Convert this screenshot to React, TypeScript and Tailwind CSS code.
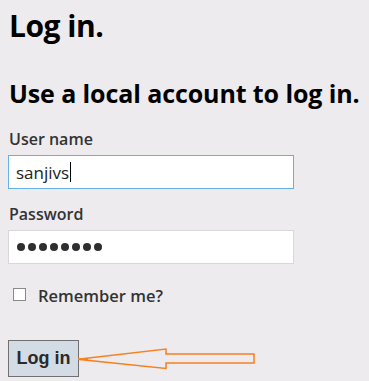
export default function App() {
  const dots = [0, 1, 2, 3, 4, 5, 6, 7];

  return (
    <div className="w-[369px] h-[381px] overflow-hidden bg-[#edebee] text-[#333] font-['Open_Sans',sans-serif]">
      <div className="pl-[8px] pt-[6px]">
        {/* Headings */}
        <h1 className="pl-[1px] text-[30px] leading-[40px] font-bold text-black tracking-[-0.5px]">Log in.</h1>
        <h2 className="pl-[1px] mt-[32px] text-[25px] leading-[30px] font-bold text-black tracking-[-0.1px]">
          Use a local account to log in.
        </h2>

        {/* User name */}
        <label className="block mt-[21px] pl-[1px] text-[16px] leading-[20px] font-semibold">User name</label>
        <div className="mt-[6px] w-[286px] h-[34px] bg-white border border-[#66afe9] flex items-center pl-[7px]">
          <span className="text-[17px] text-[#222] leading-none">sanjivs</span>
          <span className="ml-[1px] w-px h-[20px] bg-black" />
        </div>

        {/* Password */}
        <label className="block mt-[15px] pl-[1px] text-[16px] leading-[20px] font-semibold">Password</label>
        <div className="mt-[6px] w-[286px] h-[34px] bg-white border border-[#d8d8dc] flex items-center pl-[8px] gap-[3px]">
          {dots.map((d) => (
            <span key={d} className="w-[8px] h-[8px] rounded-full bg-[#2e2e30]" />
          ))}
        </div>

        {/* Remember me */}
        <div className="mt-[22px] flex items-start">
          <span className="mt-[2px] ml-[5px] w-[13px] h-[13px] bg-white border border-[#8a8a8a]" />
          <span className="ml-[12px] text-[16.5px] leading-[20px] font-semibold">Remember me?</span>
        </div>

        {/* Button + arrow */}
        <div className="mt-[34px] flex items-center">
          <button className="w-[71px] h-[37px] bg-[#d3dbe5] border border-[#707070] font-['Liberation_Sans',sans-serif] font-bold text-[18px] text-[#2a2a2a]">
            Log in
          </button>
          <svg width="178" height="24" viewBox="0 0 178 24" className="-ml-px">
            <polygon
              points="2,12 88,2 88,7 176,7 176,16 88,16 88,21.5 2,12.5"
              fill="none"
              stroke="#f7801f"
              strokeWidth="1.5"
              strokeLinejoin="miter"
            />
            <line x1="0" y1="12" x2="10" y2="12" stroke="#f7801f" strokeWidth="2" />
          </svg>
        </div>
      </div>
    </div>
  );
}
